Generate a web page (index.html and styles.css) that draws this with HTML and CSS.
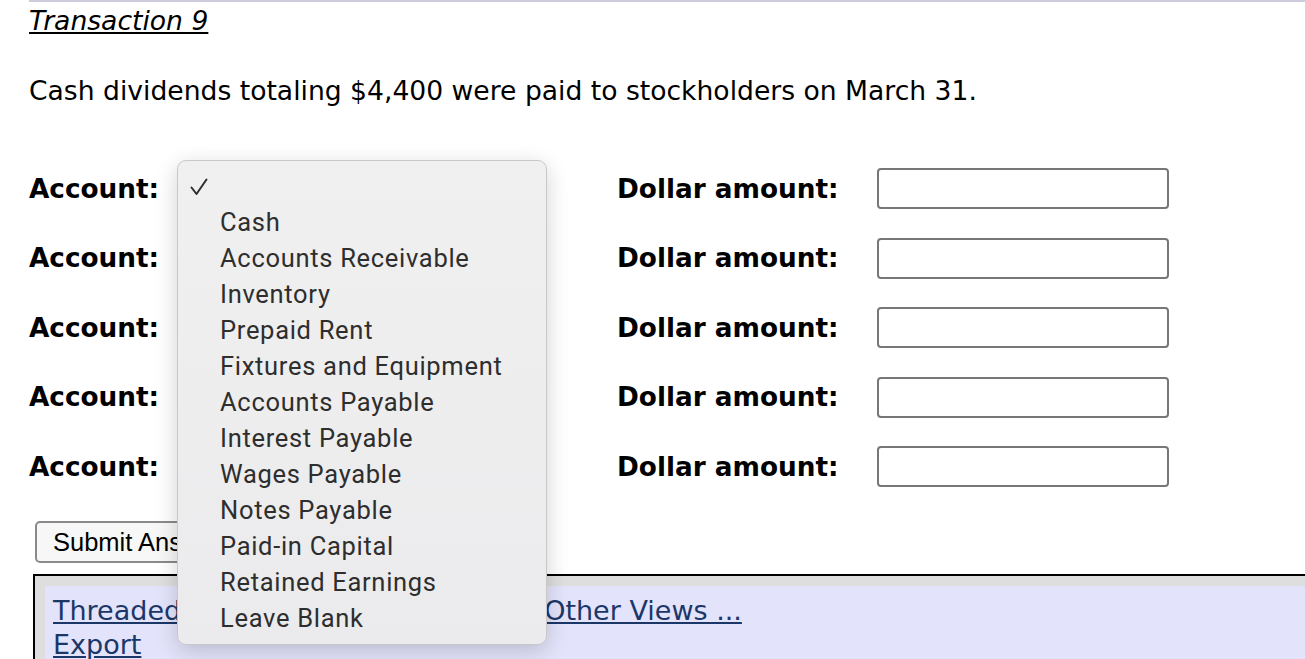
FILE: index.html
```html
<!DOCTYPE html>
<html>
<head>
<meta charset="utf-8">
<link rel="stylesheet" href="styles.css">
</head>
<body>
<div class="page">
  <div class="topline"></div>
  <h3 class="title">Transaction 9</h3>
  <p class="desc">Cash dividends totaling $4,400 were paid to stockholders on March 31.</p>
  <div class="rows">
    <span class="label">Account:</span><select class="acct"><option></option></select><span class="label">Dollar amount:</span><input class="amt" type="text">
    <span class="label">Account:</span><select class="acct"><option></option></select><span class="label">Dollar amount:</span><input class="amt" type="text">
    <span class="label">Account:</span><select class="acct"><option></option></select><span class="label">Dollar amount:</span><input class="amt" type="text">
    <span class="label">Account:</span><select class="acct"><option></option></select><span class="label">Dollar amount:</span><input class="amt" type="text">
    <span class="label">Account:</span><select class="acct"><option></option></select><span class="label">Dollar amount:</span><input class="amt" type="text">
  </div>
  <button class="submit">Submit Answers</button>
  <div class="footer">
    <div class="footer-inner">
      <div class="links-line"><a href="#" class="first">Threaded</a><span class="mid"></span><a href="#">Other Views ...</a></div>
      <div class="links-line"><a href="#">Export</a></div>
    </div>
  </div>
  <div class="popup">
    <div class="item checked"><svg class="check" width="18" height="18" viewBox="0 0 18 18"><polyline points="1.5,9.5 6.5,16 16.5,1.5" fill="none" stroke="#2e2e2e" stroke-width="2" stroke-linecap="round" stroke-linejoin="round"/></svg></div>
    <div class="item">Cash</div>
    <div class="item">Accounts Receivable</div>
    <div class="item">Inventory</div>
    <div class="item">Prepaid Rent</div>
    <div class="item">Fixtures and Equipment</div>
    <div class="item">Accounts Payable</div>
    <div class="item">Interest Payable</div>
    <div class="item">Wages Payable</div>
    <div class="item">Notes Payable</div>
    <div class="item">Paid-in Capital</div>
    <div class="item">Retained Earnings</div>
    <div class="item">Leave Blank</div>
  </div>
</div>
</body>
</html>
```

FILE: styles.css
```css
html, body {
  margin: 0;
  padding: 0;
  background: #fff;
  overflow: hidden;
}
body {
  width: 1305px;
  height: 659px;
  font-family: "DejaVu Sans", Verdana, sans-serif;
  color: #000;
}
.page {
  position: relative;
  padding-left: 29px;
}
.topline {
  height: 2px;
  background: #ccccdd;
}
.title {
  margin: 0;
  padding-top: 3px;
  font-size: 26.6px;
  font-weight: normal;
  font-style: italic;
  text-decoration: underline;
  line-height: 32px;
}
.desc {
  margin: 0;
  padding-top: 38px;
  font-size: 26.6px;
  line-height: 32px;
}
.rows {
  display: grid;
  grid-template-columns: 148px 440px 260px 292px;
  grid-auto-rows: 41px;
  row-gap: 28.5px;
  align-items: center;
  margin-top: 61px;
}
.label {
  font-weight: bold;
  font-size: 26.3px;
  line-height: 32px;
}
.acct {
  width: 200px;
  height: 30px;
}
.amt {
  box-sizing: border-box;
  width: 292px;
  height: 41px;
  border: 2px solid #777;
  border-radius: 4px;
  margin: 0;
  background: #fff;
}
.submit {
  display: block;
  margin: 34px 0 0 6px;
  height: 42px;
  padding: 0 16px;
  font-family: "Liberation Sans", Arial, sans-serif;
  font-size: 25.5px;
  color: #000;
  background: #f7f7f7;
  border: 2px solid #8a8a8a;
  border-radius: 5px;
}
.footer {
  margin: 11px 0 0 4px;
  border-top: 2px solid #000;
  border-left: 2px solid #000;
  background: #dedede;
  padding: 10px 0 0 10px;
  height: 73px;
}
.footer-inner {
  background: #e3e3fb;
  padding: 8px 0 0 8px;
  height: 65px;
  overflow: hidden;
}
.links-line {
  display: flex;
  font-size: 27px;
  line-height: 34px;
}
.links-line a {
  color: #1b3768;
  text-decoration: underline;
}
.links-line .mid {
  flex: 0 0 auto;
  width: 363px;
}
.popup {
  position: absolute;
  left: 177px;
  top: 160px;
  width: 370px;
  height: 485px;
  box-sizing: border-box;
  padding-top: 7px;
  background: linear-gradient(#f0f0f0, #ebebed);
  border: 1px solid #c8c8c8;
  border-radius: 9px;
  box-shadow: 0 6px 22px rgba(0,0,0,0.18);
  font-family: Roboto, "Noto Sans", sans-serif;
  color: #2e2e2e;
}
.item {
  height: 36px;
  line-height: 36px;
  padding-left: 42px;
  font-size: 25.5px;
  letter-spacing: 0.7px;
  position: relative;
}
.check {
  position: absolute;
  left: 12px;
  top: 10px;
}
```
